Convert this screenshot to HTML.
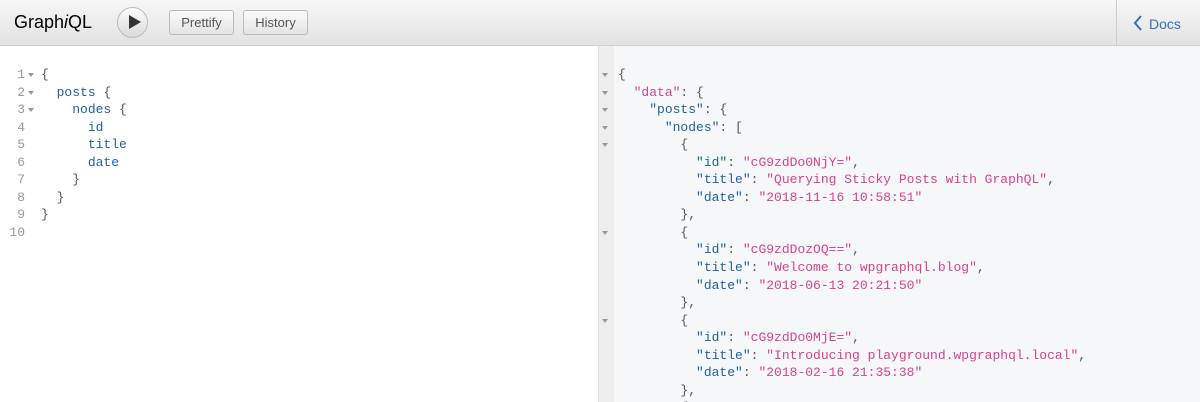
<!DOCTYPE html><html><head><style>
html,body{margin:0;width:1200px;height:402px;overflow:hidden}
body{font-family:"Liberation Sans",sans-serif;background:#fff;position:relative}
.top{position:absolute;left:0;top:0;width:1200px;height:45px;background:linear-gradient(#f7f7f7,#e2e2e2);border-bottom:1px solid #d0d0d0}
.logo{position:absolute;left:14px;top:12px;font-size:18px;color:#000}
.run{position:absolute;left:117px;top:7px;width:31px;height:31px;border-radius:50%;border:1px solid #bbb;background:linear-gradient(#fdfdfd,#d9d9d9);box-sizing:border-box}
.run:after{content:"";position:absolute;left:11px;top:7px;border-left:12px solid #333;border-top:7px solid transparent;border-bottom:7px solid transparent}
.btn{position:absolute;top:10px;height:25px;border:1px solid #bbb;border-radius:3px;background:linear-gradient(#fafafa,#e4e4e4);font-size:13px;color:#555;line-height:24px;text-align:center;box-sizing:border-box}
.docs{position:absolute;left:1116px;top:0;width:84px;height:45px;border-left:1px solid #ccc;color:#3b6fb0;font-size:14px}
.code{position:absolute;font-family:"Liberation Mono",monospace;font-size:13px;line-height:17.55px;white-space:pre;top:66px}
.k{color:#1f61a0}.s{color:#d64292}.p{color:#555}
.res{position:absolute;left:598px;top:46px;width:602px;height:356px;background:#f6f7f8;border-left:1px solid #e0e0e0;overflow:hidden}
.rg{position:absolute;left:0;top:0;width:15px;height:356px;background:#eeeeee}
.ar{position:absolute;width:0;height:0;border-left:3.5px solid transparent;border-right:3.5px solid transparent;border-top:4px solid #999}
</style></head><body>
<div class="top">
<div class="logo">Graph<i>i</i>QL</div>
<div class="run"></div>
<div class="btn" style="left:169px;width:65px">Prettify</div>
<div class="btn" style="left:243px;width:65px">History</div>
<div class="docs"><svg style="position:absolute;left:16px;top:15px" width="10" height="16" viewBox="0 0 10 16"><path d="M8 1L2 8l6 7" fill="none" stroke="#3b6fb0" stroke-width="2"/></svg><span style="position:absolute;left:32px;top:16px">Docs</span></div>
</div>
<div class="code" style="left:0;width:25px;text-align:right;color:#999">1
2
3
4
5
6
7
8
9
10</div>
<div class="ar" style="left:28px;top:73px"></div>
<div class="ar" style="left:28px;top:91px"></div>
<div class="ar" style="left:28px;top:108px"></div>
<div class="code p" style="left:41px">{
  <span class="k">posts</span> {
    <span class="k">nodes</span> {
      <span class="k">id</span>
      <span class="k">title</span>
      <span class="k">date</span>
    }
  }
}</div>
<div class="res"><div class="rg"></div>
<div class="ar" style="left:3px;top:27px"></div>
<div class="ar" style="left:3px;top:45px"></div>
<div class="ar" style="left:3px;top:62px"></div>
<div class="ar" style="left:3px;top:80px"></div>
<div class="ar" style="left:3px;top:97px"></div>
<div class="ar" style="left:3px;top:185px"></div>
<div class="ar" style="left:3px;top:273px"></div>
<div class="code p" style="left:19px;top:20px">{
  <span class="s">"data"</span>: {
    <span class="k">"posts"</span>: {
      <span class="k">"nodes"</span>: [
        {
          <span class="k">"id"</span>: <span class="s">"cG9zdDo0NjY="</span>,
          <span class="k">"title"</span>: <span class="s">"Querying Sticky Posts with GraphQL"</span>,
          <span class="k">"date"</span>: <span class="s">"2018-11-16 10:58:51"</span>
        },
        {
          <span class="k">"id"</span>: <span class="s">"cG9zdDozOQ=="</span>,
          <span class="k">"title"</span>: <span class="s">"Welcome to wpgraphql.blog"</span>,
          <span class="k">"date"</span>: <span class="s">"2018-06-13 20:21:50"</span>
        },
        {
          <span class="k">"id"</span>: <span class="s">"cG9zdDo0MjE="</span>,
          <span class="k">"title"</span>: <span class="s">"Introducing playground.wpgraphql.local"</span>,
          <span class="k">"date"</span>: <span class="s">"2018-02-16 21:35:38"</span>
        },
        {</div>
</div>
</body></html>
